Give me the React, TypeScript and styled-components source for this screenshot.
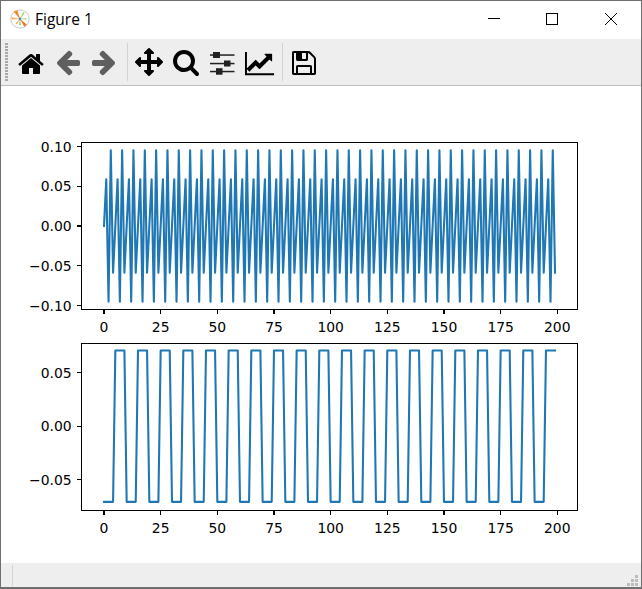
import React from "react";
import styled, { createGlobalStyle } from "styled-components";

const Global = createGlobalStyle`
  html, body { margin: 0; padding: 0; background: #fff; }
  #root { width: 642px; height: 589px; overflow: hidden; }
`;

const Window = styled.div`
  box-sizing: border-box;
  width: 642px;
  height: 589px;
  display: flex;
  flex-direction: column;
  border: 1px solid #6f6f6f;
  border-bottom-width: 2px;
  background: #fff;
`;

const TitleBar = styled.header`
  height: 38px;
  flex: none;
  box-sizing: border-box;
  display: flex;
  align-items: center;
  padding: 0 1px 2px 9px;
  background: #fff;
`;

const Title = styled.span`
  margin-left: 5px;
  font: 15.5px "Open Sans", "Noto Sans", sans-serif;
  color: #000;
`;

const Controls = styled.div`
  margin-left: auto;
  display: flex;
  height: 100%;
`;

const ControlButton = styled.div`
  width: 58.5px;
  display: flex;
  align-items: center;
  justify-content: center;
`;

const Toolbar = styled.div`
  height: 47px;
  flex: none;
  box-sizing: border-box;
  display: flex;
  align-items: center;
  padding-left: 4px;
  background: #eeeeee;
  border-bottom: 1px solid #bdbdbd;
`;

const Grip = styled.div`
  width: 3px;
  height: 39px;
  margin-right: 4.7px;
  background-image: radial-gradient(circle at 1px 1px, #a8a8a8 1px, transparent 1px);
  background-size: 2px 3px;
`;

const ToolButton = styled.div<{ $padTop?: number; $padLeft?: number }>`
  box-sizing: border-box;
  width: 36.6px;
  height: 36px;
  display: flex;
  align-items: center;
  justify-content: center;
  flex: none;
  padding: ${(p) => p.$padTop ?? 0}px 0 0 ${(p) => p.$padLeft ?? 0}px;
`;

const Separator = styled.div`
  width: 1px;
  height: 38px;
  margin: 0 3px 0 4.5px;
  background: #d2d2d2;
  flex: none;
`;

const Canvas = styled.main`
  flex: 1;
  min-height: 0;
  background: #fff;
  display: flex;
`;

const FigureSvg = styled.svg`
  display: block;
  width: 640px;
  height: 477px;
`;

const TickLabel = styled.text`
  font-family: "DejaVu Sans", sans-serif;
  font-size: 13.9px;
  fill: #000;
`;

const StatusBar = styled.footer`
  flex: none;
  height: 24px;
  display: flex;
  align-items: center;
  justify-content: space-between;
  padding: 0 3px 0 11px;
  background: #eeeeee;
`;

const StatusDivider = styled.div`
  width: 1px;
  height: 21px;
  background: #d4d4d4;
`;

const SizeGrip = styled.svg`
  width: 11px;
  height: 11px;
  align-self: flex-end;
  margin-bottom: 1px;
`;

const FA = "0 0 1792 1792";
const HOME = "M1472 992v480q0 26-19 45t-45 19h-384v-384h-256v384h-384q-26 0-45-19t-19-45v-480q0-1 .5-3t.5-3l575-474 575 474q1 2 1 6zm223-69l-62 74q-8 9-21 11h-3q-13 0-21-7l-692-577-692 577q-12 8-24 7-13-2-21-11l-62-74q-8-10-7-23.500t11-21.500l719-599q32-26 76-26t76 26l244 204v-195q0-14 9-23t23-9h192q14 0 23 9t9 23v408l219 182q10 8 11 21.500t-7 23.500z";
const LEFT = "M1664 896v128q0 53-32.500 90.500t-84.500 37.500h-704l293 294q38 36 38 90t-38 90l-75 76q-37 37-90 37-52 0-91-37l-651-652q-37-37-37-90 0-52 37-91l651-650q38-38 91-38 52 0 90 38l75 74q38 38 38 91t-38 91l-293 293h704q52 0 84.500 37.500t32.500 90.500z";
const RIGHT = "M1600 960q0 54-37 91l-651 651q-39 37-91 37-51 0-90-37l-75-75q-38-38-38-91t38-91l293-293h-704q-52 0-84.500-37.500t-32.500-90.500v-128q0-53 32.500-90.500t84.500-37.500h704l-293-294q-38-36-38-90t38-90l75-75q38-38 90-38 53 0 91 38l651 651q37 35 37 90z";
const MOVE = "M1792 896q0 26-19 45l-256 256q-19 19-45 19t-45-19-19-45v-128h-384v384h128q26 0 45 19t19 45-19 45l-256 256q-19 19-45 19t-45-19l-256-256q-19-19-19-45t19-45 45-19h128v-384h-384v128q0 26-19 45t-45 19-45-19l-256-256q-19-19-19-45t19-45l256-256q19-19 45-19t45 19 19 45v128h384v-384h-128q-26 0-45-19t-19-45 19-45l256-256q19-19 45-19t45 19l256 256q19 19 19 45t-19 45-45 19h-128v384h384v-128q0-26 19-45t45-19 45 19l256 256q19 19 19 45z";
const SEARCH = "M1216 832q0-185-131.500-316.500t-316.500-131.500-316.500 131.500-131.500 316.500 131.500 316.500 316.500 131.500 316.500-131.500 131.500-316.500zm512 832q0 52-38 90t-90 38q-54 0-90-38l-343-342q-179 124-399 124-143 0-273.500-55.500t-225-150-150-225-55.500-273.500 55.500-273.500 150-225 225-150 273.500-55.500 273.500 55.500 225 150 150 225 55.500 273.500q0 220-124 399l343 343q37 37 37 90z";
const CHART = "M1920 1536v128h-1920v-1536h128v1408h1792zm-128-1248v435q0 21-19.500 29.500t-35.500-7.500l-121-121-633 633q-10 10-23 10t-23-10l-233-233-416 416-192-192 585-585q10-10 23-10t23 10l233 233 464-464-121-121q-16-16-7.500-35.500t29.500-19.500h435q14 0 23 9t9 23z";
const SAVE = "M384 1536h768v-384h-768v384zm896 0h128v-896q0-14-10-38.500t-20-34.500l-281-281q-10-10-34-20t-39-10v416q0 40-28 68t-68 28h-576q-40 0-68-28t-28-68v-416h-128v1280h128v-416q0-40 28-68t68-28h832q40 0 68 28t28 68v416zm-384-928v-320q0-13-9.500-22.500t-22.500-9.500h-192q-13 0-22.500 9.500t-9.500 22.500v320q0 13 9.500 22.500t22.500 9.500h192q13 0 22.500-9.500t9.500-22.500zm640 32v928q0 40-28 68t-68 28h-1344q-40 0-68-28t-28-68v-1344q0-40 28-68t68-28h928q40 0 88 20t76 48l280 280q28 28 48 76t20 88z";

const Icon = ({ d, size, box = FA, color = "#000" }: { d: string; size: number; box?: string; color?: string }) => (
  <svg width={size} height={size} viewBox={box}>
    <path d={d} fill={color} />
  </svg>
);

const SlidersIcon = () => (
  <svg width="26" height="26" viewBox="0 0 26 26">
    <g fill="#222">
      <rect x="1" y="4.300" width="24.500" height="1.500" />
      <rect x="1" y="12.800" width="24.500" height="1.500" />
      <rect x="1" y="20.800" width="24.500" height="1.500" />
      <rect x="4" y="2" width="7" height="6" />
      <rect x="15" y="10.500" width="6.500" height="6" />
      <rect x="7" y="18.200" width="6.500" height="6.500" />
    </g>
  </svg>
);

const AppLogo = () => (
  <svg width="20" height="20" viewBox="0 0 20 20">
    <circle cx="10" cy="10" r="9.200" fill="#fff" stroke="#c8c8c8" />
    <path d="M10 10L3.500 2.500L7.500 1.500Z" fill="#f28a1e" />
    <path d="M10 10L1.500 8L1.800 10.500Z" fill="#f3b45a" />
    <path d="M10 10L16.800 15.500L14.300 17.800Z" fill="#e9762b" />
    <path d="M10 10L13 3L14.800 4Z" fill="#a6d36a" />
    <path d="M10 10L16.500 8.800L16.500 10.800Z" fill="#b7d98a" />
    <path d="M10 10L11 16L9 16Z" fill="#9ccb62" />
    <path d="M10 10L5.500 14.500L7 15.500Z" fill="#e6b15a" />
    <circle cx="10" cy="10" r="1.400" fill="#5f87a8" />
  </svg>
);

// Page coordinates of the canvas origin
const OX = 1;
const OY = 86;
const AX_LEFT = 81.5;
const AX_RIGHT = 577.5;
const px = (k: number) => 104 + 2.2665 * k - OX;

const wave1 = Array.from({ length: 200 }, (_, k) => 0.1 * Math.sin(2 * Math.PI * 0.4 * k));
const wave2 = Array.from({ length: 200 }, (_, k) => (Math.floor(k / 5) % 2 === 0 ? -0.0707 : 0.0707));

interface AxesProps {
  top: number;
  bottom: number;
  mid: number;
  scale: number;
  data: number[];
  yTicks: { v: number; label: string }[];
}

const Axes = ({ top, bottom, mid, scale, data, yTicks }: AxesProps) => {
  const t = top - OY;
  const b = bottom - OY;
  const l = AX_LEFT - OX;
  const r = AX_RIGHT - OX;
  const py = (v: number) => mid - OY - v * scale;
  const points = data.map((v, k) => `${px(k).toFixed(2)},${py(v).toFixed(2)}`).join(" ");
  return (
    <g>
      <polyline points={points} fill="none" stroke="#1f77b4" strokeWidth="2.08" strokeLinejoin="round" strokeLinecap="square" />
      <rect x={l} y={t} width={r - l} height={b - t} fill="none" stroke="#000" strokeWidth="1.1" shapeRendering="crispEdges" />
      {[0, 25, 50, 75, 100, 125, 150, 175, 200].map((v) => (
        <g key={v}>
          <line x1={px(v)} x2={px(v)} y1={b} y2={b + 4.9} stroke="#000" strokeWidth="1.1" shapeRendering="crispEdges" />
          <TickLabel x={px(v)} y={b + 22.5} textAnchor="middle">{v}</TickLabel>
        </g>
      ))}
      {yTicks.map(({ v, label }) => (
        <g key={label}>
          <line x1={l - 4.9} x2={l} y1={py(v)} y2={py(v)} stroke="#000" strokeWidth="1.1" shapeRendering="crispEdges" />
          <TickLabel x={l - 9.8} y={py(v) + 5.2} textAnchor="end">{label}</TickLabel>
        </g>
      ))}
    </g>
  );
};

const ticks1 = [
  { v: 0.1, label: "0.10" },
  { v: 0.05, label: "0.05" },
  { v: 0, label: "0.00" },
  { v: -0.05, label: "\u22120.05" },
  { v: -0.1, label: "\u22120.10" },
];
const ticks2 = [
  { v: 0.05, label: "0.05" },
  { v: 0, label: "0.00" },
  { v: -0.05, label: "\u22120.05" },
];

export default function App() {
  return (
    <Window>
      <Global />
      <TitleBar>
        <AppLogo />
        <Title>Figure 1</Title>
        <Controls>
          <ControlButton>
            <svg width="12" height="12" viewBox="0 0 12 12"><rect x="0" y="5" width="12" height="1" fill="#000" /></svg>
          </ControlButton>
          <ControlButton>
            <svg width="12" height="12" viewBox="0 0 12 12"><rect x="0.5" y="0.5" width="11" height="11" fill="none" stroke="#000" /></svg>
          </ControlButton>
          <ControlButton>
            <svg width="12" height="12" viewBox="0 0 12 12"><path d="M0 0L12 12M12 0L0 12" stroke="#000" strokeWidth="1" fill="none" /></svg>
          </ControlButton>
        </Controls>
      </TitleBar>
      <Toolbar>
        <Grip />
        <ToolButton $padTop={3}><Icon d={HOME} size={28} /></ToolButton>
        <ToolButton><Icon d={LEFT} size={28} color="#5f5f5f" /></ToolButton>
        <ToolButton><Icon d={RIGHT} size={28} color="#5f5f5f" /></ToolButton>
        <Separator />
        <ToolButton><Icon d={MOVE} size={28} /></ToolButton>
        <ToolButton><Icon d={SEARCH} size={28} /></ToolButton>
        <ToolButton $padTop={2}><SlidersIcon /></ToolButton>
        <ToolButton $padTop={2} $padLeft={2}><Icon d={CHART} size={31} box="0 0 2048 1792" /></ToolButton>
        <Separator />
        <ToolButton $padTop={2} $padLeft={3}><Icon d={SAVE} size={28} /></ToolButton>
      </Toolbar>
      <Canvas>
        <FigureSvg viewBox="0 0 640 477">
          <Axes top={142.5} bottom={309.5} mid={226} scale={796} data={wave1} yTicks={ticks1} />
          <Axes top={343.5} bottom={510.5} mid={426.2} scale={1070} data={wave2} yTicks={ticks2} />
        </FigureSvg>
      </Canvas>
      <StatusBar>
        <StatusDivider />
        <SizeGrip viewBox="0 0 11 11">
          <g fill="#bcbcbc">
            <rect x="8" y="0" width="3" height="3" />
            <rect x="4" y="4" width="3" height="3" />
            <rect x="8" y="4" width="3" height="3" />
            <rect x="0" y="8" width="3" height="3" />
            <rect x="4" y="8" width="3" height="3" />
            <rect x="8" y="8" width="3" height="3" />
          </g>
        </SizeGrip>
      </StatusBar>
    </Window>
  );
}
